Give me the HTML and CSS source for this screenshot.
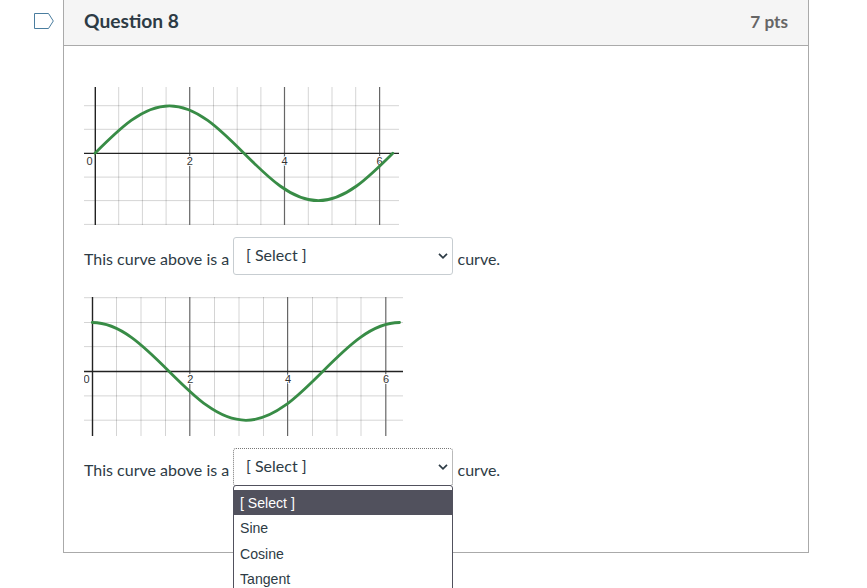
FILE: index.html
```
<!DOCTYPE html>
<html lang="en">

<head>
    <meta charset="UTF-8">
    <title>Question 8</title>
    <link rel="stylesheet" href="styles.css">
</head>

<body>

    <div class="quiz">

        <div class="flag">
            <svg class="flag-icon" viewBox="0 0 20 16">
                <path d="M.5.5H14.5L19.3 8L14.5 15.5H.5Z" />
            </svg>
        </div>

        <div class="question">

            <div class="question-header">
                <h2>Question 8</h2>
                <span class="points">7 pts</span>
            </div>

            <div class="question-body">

                <!-- Sine graph -->
                <svg class="graph graph-sine" viewBox="0 0 315 138">
                    <path class="grid" d="M34.7 0V138M58.4 0V138M82.1 0V138M129.5 0V138M153.2 0V138M176.9 0V138M224.3 0V138M248 0V138M271.7 0V138M0 18.7H315M0 42.3H315M0 90.1H315M0 113.6H315M0 137.4H315" />
                    <path class="major" d="M105.7 0V138M200.5 0V138M295.6 0V138" />
                    <path class="axis" d="M11.3 0V138M0 66.4H315" />
                    <text x="5.5" y="77.5">0</text>
                    <text x="105.8" y="77.5">2</text>
                    <text x="200.5" y="77.5">4</text>
                    <text x="295.5" y="77.5">6</text>
                    <g transform="translate(11 66.2) scale(47.4 -47.4)">
                        <path class="curve" d="M0 0C.512 .512 1.002 1 1.571 1S2.629 .512 3.142 0S4.144 -1 4.712 -1S5.771 -.512 6.283 0" />
                    </g>
                </svg>

                <div class="sentence">
                    <span>This curve above is a</span>
                    <div class="select">
                        <span>[ Select ]</span>
                        <svg class="chevron" viewBox="0 0 10 6">
                            <path d="M1 .8L5 4.8L9 .8" />
                        </svg>
                    </div>
                    <span>curve.</span>
                </div>

                <!-- Cosine graph -->
                <svg class="graph graph-cosine" viewBox="0 0 319 139">
                    <path class="grid" d="M32.5 0V139M57 0V139M81.5 0V139M130.5 0V139M155 0V139M179.5 0V139M228.5 0V139M253 0V139M277 0V139M0 .7H319M0 25.5H319M0 49.6H319M0 98.9H319M0 123.2H319" />
                    <path class="major" d="M105.8 0V139M203.6 0V139M301.8 0V139" />
                    <path class="axis" d="M8.5 0V139M0 74.5H319" />
                    <text x="2.5" y="86">0</text>
                    <text x="106.2" y="86">2</text>
                    <text x="204" y="86">4</text>
                    <text x="302" y="86">6</text>
                    <g transform="translate(8.3 74.4) scale(48.9 -48.9)">
                        <path class="curve" d="M0 1C.568 1 1.058 .512 1.571 0S2.573 -1 3.142 -1S4.2 -.512 4.712 0S5.715 1 6.283 1" />
                    </g>
                </svg>

                <div class="sentence">
                    <span>This curve above is a</span>
                    <div class="select select-open">
                        <span>[ Select ]</span>
                        <svg class="chevron" viewBox="0 0 10 6">
                            <path d="M1 .8L5 4.8L9 .8" />
                        </svg>
                        <ul class="options">
                            <li class="active">[ Select ]</li>
                            <li>Sine</li>
                            <li>Cosine</li>
                            <li>Tangent</li>
                        </ul>
                    </div>
                    <span>curve.</span>
                </div>

            </div>
        </div>
    </div>

</body>

</html>
```

FILE: styles.css
```
:root {
    --text: #2d3b45;
    --border: #aaa;
    --menu: #51515d;
    --curve: #388c46;
}

* {
    box-sizing: border-box;
}

body {
    font-family: Lato, sans-serif;
    font-size: 16px;
    background: #fff;
    color: var(--text);
    margin: 0;
    height: 588px;
    overflow: hidden;
}

.quiz {
    display: flex;
    padding-left: 34px;
}

.flag {
    width: 29px;
    padding-top: 13px;
}

.flag-icon {
    display: block;
    width: 20px;
    height: 16px;
    fill: none;
    stroke: #4a7d9f;
}

.question {
    width: 746px;
    height: 553px;
    border: 1px solid var(--border);
    border-top: 0;
}

.question-header {
    display: flex;
    align-items: center;
    justify-content: space-between;
    height: 46px;
    padding: 0 20px 3px;
    background: #f5f5f5;
    border-bottom: 1px solid var(--border);
}

h2 {
    font-size: 19.2px;
    margin: 0;
    padding-bottom: 2px;
}

.points {
    font-size: 17.2px;
    font-weight: bold;
    color: #666;
    padding-top: 1px;
}

.question-body {
    padding: 41px 20px 0;
}

.graph {
    display: block;
    fill: none;
}

.graph-sine {
    width: 315px;
    height: 138px;
    margin-bottom: 12px;
}

.graph-cosine {
    width: 319px;
    height: 139px;
    margin: 22px 0 12px;
}

.grid {
    stroke: #000;
    stroke-opacity: 0.17;
}

.major {
    stroke: #666;
    stroke-width: 1.2;
}

.axis {
    stroke: #222;
    stroke-width: 1.4;
}

.curve {
    stroke: var(--curve);
    stroke-width: 2.8;
    stroke-linecap: round;
    vector-effect: non-scaling-stroke;
}

.graph text {
    font-family: "Liberation Sans", Arial, sans-serif;
    font-size: 11px;
    text-anchor: middle;
    fill: #333;
    stroke: #fff;
    stroke-width: 2;
    paint-order: stroke;
}

.sentence {
    display: flex;
    align-items: center;
    gap: 4.5px;
    height: 38px;
    white-space: nowrap;
}

.sentence > span {
    padding-top: 5px;
}

.sentence > span:first-child {
    width: 144.5px;
}

.select {
    position: relative;
    display: flex;
    align-items: center;
    justify-content: space-between;
    width: 220px;
    height: 38px;
    padding: 0 4px 1px 12px;
    border: 1px solid #c7cdd1;
    border-radius: 3px;
}

.select > span {
    padding-bottom: 2px;
}

.select-open {
    border: 1px dotted #777;
}

.chevron {
    width: 10px;
    height: 6px;
    fill: none;
    stroke: var(--text);
    stroke-width: 1.7;
}

.options {
    position: absolute;
    top: 36px;
    left: -1px;
    width: 220px;
    margin: 0;
    padding: 4px 0 0;
    list-style: none;
    font: 14.1px/24.3px "Liberation Sans", Arial, sans-serif;
    background: #fff;
    border: 1px solid var(--menu);
    border-radius: 3px 3px 0 0;
}

.options li {
    padding: 1px 0 0 6px;
}

.options .active {
    background: var(--menu);
    color: #fff;
}
```
